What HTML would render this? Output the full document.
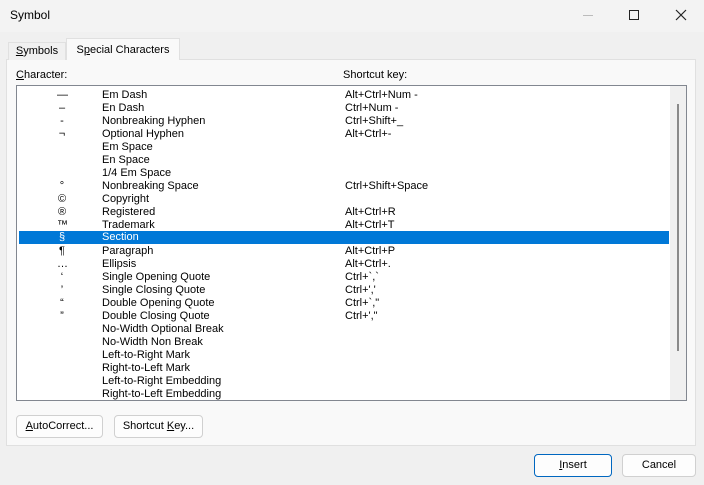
<!DOCTYPE html>
<html><head><style>
*{margin:0;padding:0;box-sizing:border-box}
body{width:704px;height:485px;background:#f0f0f0;font-family:"Liberation Sans",sans-serif;font-size:11px;color:#000;position:relative;overflow:hidden}
.a{position:absolute}
.title{left:0;top:0;width:704px;height:32px;background:#f3f3f3}
.row{position:absolute;left:2px;width:650px;height:13px;line-height:13px;white-space:nowrap}
.row span{position:absolute}
.c{left:38px;width:10px;text-align:center}
.n{left:83px}
.k{left:326px}
.sel{background:#0078d7;color:#fff}
.btn{position:absolute;height:23px;border:1px solid #d0d0d0;border-radius:4px;background:#fdfdfd;text-align:center;line-height:21px;font-size:11px}
u{text-decoration:underline}
</style></head><body>
<div class="a title"></div>
<div class="a" style="left:10px;top:8px;font-size:12px">Symbol</div>
<div class="a" style="left:583px;top:15px;width:10px;height:1px;background:#bbb"></div>
<div class="a" style="left:629px;top:10px;width:10px;height:10px;border:1px solid #222"></div>
<svg class="a" style="left:675px;top:9px" width="12" height="12"><path d="M1 1L11 11M11 1L1 11" stroke="#222" stroke-width="1.2"/></svg>

<div class="a" style="left:6px;top:59px;width:690px;height:387px;background:#f9f9f9;border:1px solid #e0e0e0"></div>
<div class="a" style="left:8px;top:42px;width:58px;height:18px;border:1px solid #e0e0e0;border-bottom:none;background:#f0f0f0;text-align:center;line-height:17px"><u>S</u>ymbols</div>
<div class="a" style="left:66px;top:38px;width:114px;height:22px;border:1px solid #e0e0e0;border-bottom:none;background:#f9f9f9;text-align:center;line-height:22px">S<u>p</u>ecial Characters</div>

<div class="a" style="left:16px;top:69px"><u>C</u>haracter:</div>
<div class="a" style="left:343px;top:69px">Shortcut key:</div>

<div class="a" style="left:16px;top:85px;width:671px;height:316px;background:#fff;border:1px solid #828790">
<div class="a" style="right:0;top:0;width:16px;height:314px;background:#f0f0f0"></div>
<div class="a" style="left:660px;top:18px;width:2px;height:247px;background:#8a8a8a"></div>
<div class="row" style="top:3px"><span class="c">—</span><span class="n">Em Dash</span><span class="k">Alt+Ctrl+Num -</span></div>
<div class="row" style="top:16px"><span class="c">–</span><span class="n">En Dash</span><span class="k">Ctrl+Num -</span></div>
<div class="row" style="top:29px"><span class="c">-</span><span class="n">Nonbreaking Hyphen</span><span class="k">Ctrl+Shift+_</span></div>
<div class="row" style="top:42px"><span class="c">¬</span><span class="n">Optional Hyphen</span><span class="k">Alt+Ctrl+-</span></div>
<div class="row" style="top:55px"><span class="n">Em Space</span></div>
<div class="row" style="top:68px"><span class="n">En Space</span></div>
<div class="row" style="top:81px"><span class="n">1/4 Em Space</span></div>
<div class="row" style="top:94px"><span class="c">°</span><span class="n">Nonbreaking Space</span><span class="k">Ctrl+Shift+Space</span></div>
<div class="row" style="top:107px"><span class="c">©</span><span class="n">Copyright</span></div>
<div class="row" style="top:120px"><span class="c">®</span><span class="n">Registered</span><span class="k">Alt+Ctrl+R</span></div>
<div class="row" style="top:133px"><span class="c">™</span><span class="n">Trademark</span><span class="k">Alt+Ctrl+T</span></div>
<div class="row sel" style="top:145px;height:13px"><span class="c">§</span><span class="n">Section</span></div>
<div class="row" style="top:159px"><span class="c">¶</span><span class="n">Paragraph</span><span class="k">Alt+Ctrl+P</span></div>
<div class="row" style="top:172px"><span class="c">…</span><span class="n">Ellipsis</span><span class="k">Alt+Ctrl+.</span></div>
<div class="row" style="top:185px"><span class="c">‘</span><span class="n">Single Opening Quote</span><span class="k">Ctrl+`,`</span></div>
<div class="row" style="top:198px"><span class="c">’</span><span class="n">Single Closing Quote</span><span class="k">Ctrl+','</span></div>
<div class="row" style="top:211px"><span class="c">“</span><span class="n">Double Opening Quote</span><span class="k">Ctrl+`,"</span></div>
<div class="row" style="top:224px"><span class="c">”</span><span class="n">Double Closing Quote</span><span class="k">Ctrl+',"</span></div>
<div class="row" style="top:237px"><span class="n">No-Width Optional Break</span></div>
<div class="row" style="top:250px"><span class="n">No-Width Non Break</span></div>
<div class="row" style="top:263px"><span class="n">Left-to-Right Mark</span></div>
<div class="row" style="top:276px"><span class="n">Right-to-Left Mark</span></div>
<div class="row" style="top:289px"><span class="n">Left-to-Right Embedding</span></div>
<div class="row" style="top:302px"><span class="n">Right-to-Left Embedding</span></div>
</div>

<div class="btn" style="left:16px;top:415px;width:87px"><u>A</u>utoCorrect...</div>
<div class="btn" style="left:114px;top:415px;width:89px">Shortcut <u>K</u>ey...</div>
<div class="btn" style="left:534px;top:454px;width:78px;border:1px solid #0067c0"><u>I</u>nsert</div>
<div class="btn" style="left:622px;top:454px;width:74px">Cancel</div>
</body></html>
